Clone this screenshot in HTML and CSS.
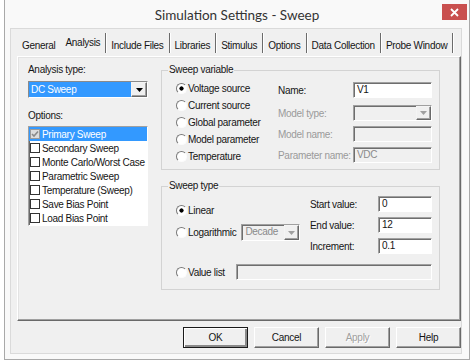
FILE: index.html
```html
<!DOCTYPE html>
<html>
<head>
<meta charset="utf-8">
<link rel="stylesheet" href="styles.css">
</head>
<body>
<div class="window">
  <div class="titlebar">
    <span class="title">Simulation Settings - Sweep</span>
    <span class="close"><svg width="9" height="9" viewBox="0 0 9 9"><path d="M1 1L8 8M8 1L1 8" stroke="#fff" stroke-width="1.8" fill="none"/></svg></span>
  </div>
  <div class="client">
    <div class="tabs">
      <span class="tab">General</span>
      <span class="tab active sep">Analysis</span>
      <span class="tab sep">Include Files</span>
      <span class="tab sep">Libraries</span>
      <span class="tab sep">Stimulus</span>
      <span class="tab sep">Options</span>
      <span class="tab sep">Data Collection</span>
      <span class="tab sep">Probe Window</span>
    </div>
    <div class="panel">
      <div class="leftcol">
        <div class="lbl">Analysis type:</div>
        <div class="combo">
          <span class="combo-text selected">DC Sweep</span>
          <span class="drop"><svg width="7" height="4" viewBox="0 0 7 4"><path d="M0 0H7L3.5 4Z" fill="#000"/></svg></span>
        </div>
        <div class="lbl options-lbl">Options:</div>
        <div class="list">
          <div class="item selected"><span class="cb grayed"><svg width="8" height="8" viewBox="0 0 8 8"><path d="M1 4L3 6L7 1.5" stroke="#8a8a8a" stroke-width="1.6" fill="none"/></svg></span>Primary Sweep</div>
          <div class="item"><span class="cb"></span>Secondary Sweep</div>
          <div class="item"><span class="cb"></span>Monte Carlo/Worst Case</div>
          <div class="item"><span class="cb"></span>Parametric Sweep</div>
          <div class="item"><span class="cb"></span>Temperature (Sweep)</div>
          <div class="item"><span class="cb"></span>Save Bias Point</div>
          <div class="item"><span class="cb"></span>Load Bias Point</div>
        </div>
      </div>
      <div class="rightcol">
        <fieldset class="group">
          <legend>Sweep variable</legend>
          <div class="g1-body">
            <div class="radios">
              <div class="radio-row"><span class="radio on"></span>Voltage source</div>
              <div class="radio-row"><span class="radio"></span>Current source</div>
              <div class="radio-row"><span class="radio"></span>Global parameter</div>
              <div class="radio-row"><span class="radio"></span>Model parameter</div>
              <div class="radio-row"><span class="radio"></span>Temperature</div>
            </div>
            <div class="fields">
              <div class="field-row first"><span class="flabel">Name:</span><span class="input">V1</span></div>
              <div class="field-row"><span class="flabel dim">Model type:</span><span class="input dis combo-input"><span class="fill"></span><span class="drop dim-drop"><svg width="7" height="4" viewBox="0 0 7 4"><path d="M0 0H7L3.5 4Z" fill="#a0a0a0"/></svg></span></span></div>
              <div class="field-row"><span class="flabel dim">Model name:</span><span class="input dis"></span></div>
              <div class="field-row"><span class="flabel dim">Parameter name:</span><span class="input dis">VDC</span></div>
            </div>
          </div>
        </fieldset>
        <fieldset class="group group2">
          <legend>Sweep type</legend>
          <div class="g2-body">
            <div class="g2-top">
              <div class="g2-left">
                <div class="radio-row"><span class="radio on"></span>Linear</div>
                <div class="radio-row"><span class="radio"></span>Logarithmic<span class="input dis combo-input decade"><span class="fill">Decade</span><span class="drop dim-drop"><svg width="7" height="4" viewBox="0 0 7 4"><path d="M0 0H7L3.5 4Z" fill="#a0a0a0"/></svg></span></span></div>
              </div>
              <div class="g2-right">
                <div class="field-row"><span class="flabel short">Start value:</span><span class="input small">0</span></div>
                <div class="field-row"><span class="flabel short">End value:</span><span class="input small">12</span></div>
                <div class="field-row"><span class="flabel short">Increment:</span><span class="input small">0.1</span></div>
              </div>
            </div>
            <div class="valuelist-row"><span class="radio"></span>Value list<span class="input dis wide"></span></div>
          </div>
        </fieldset>
      </div>
    </div>
    <div class="buttons">
      <span class="btn default">OK</span>
      <span class="btn">Cancel</span>
      <span class="btn disabled">Apply</span>
      <span class="btn">Help</span>
    </div>
  </div>
</div>
</body>
</html>
```
FILE: styles.css
```css
* { box-sizing: border-box; }
body {
  margin: 0;
  background: #fff;
  font-family: "Liberation Sans", Arial, sans-serif;
  font-size: 10px;
  letter-spacing: -0.3px;
  color: #151515;
}
.window {
  width: 466px;
  height: 360px;
  margin-left: 4px;
  background: #f9f9f9;
  border: 1px solid #a9a9a9;
  border-top: none;
  display: flex;
  flex-direction: column;
}
.titlebar {
  height: 28px;
  flex: none;
  display: grid;
  grid-template-columns: 1fr auto 1fr;
  align-items: start;
}
.title {
  grid-column: 2;
  font-family: Lato, "Liberation Sans", sans-serif;
  font-size: 13.5px;
  letter-spacing: 0;
  line-height: 16px;
  margin-top: 7px;
  color: #333;
}
.close {
  grid-column: 3;
  justify-self: end;
  width: 25px;
  height: 16px;
  margin-top: 4px;
  margin-right: 2px;
  background: #c9504f;
  display: flex;
  align-items: center;
  justify-content: center;
}
.client {
  margin: 0 7px 0 5px;
  border: 1px solid #dadada;
  background: #f0f0f0;
  padding: 4px 0 5px 6px;
}
.tabs {
  display: flex;
  height: 23px;
}
.tab {
  height: 20px;
  padding: 6px 5px 0;
  line-height: 14px;
  white-space: nowrap;
}
.tab.active { padding-top: 3px; }
.tab.sep {
  border-right: 1px solid #6b6b6b;
  box-shadow: 1px 0 0 #fff;
}
.panel {
  height: 265px;
  border: 1px solid;
  border-color: #fff #696969 #696969 #fff;
  box-shadow: inset -1px -1px #a0a0a0, inset 1px 1px #e3e3e3;
  display: flex;
  gap: 13px;
  padding: 6px 0 0 10px;
}
.leftcol {
  width: 120px;
  display: flex;
  flex-direction: column;
}
.lbl { height: 14px; line-height: 14px; }
.combo {
  margin-top: 4px;
  height: 17px;
  display: flex;
  border: 1px solid;
  border-color: #8a8a8a #fff #fff #8a8a8a;
  background: #fff;
}
.combo-text {
  flex: 1;
  line-height: 15px;
  padding-left: 2px;
}
.selected { background: #3399ff; color: #fff; }
.drop {
  width: 16px;
  flex: none;
  border: 1px solid;
  border-color: #f4f4f4 #696969 #696969 #f4f4f4;
  box-shadow: inset -1px -1px #a0a0a0;
  background: #f0f0f0;
  display: flex;
  align-items: center;
  justify-content: center;
}
.options-lbl { margin-top: 11px; }
.list {
  margin-top: 3px;
  height: 100px;
  border: 1px solid;
  border-color: #a0a0a0 #fff #fff #a0a0a0;
  box-shadow: inset 1px 1px #696969;
  background: #fff;
}
.item {
  height: 14px;
  display: flex;
  align-items: center;
  padding-left: 1px;
  white-space: nowrap;
}
.item.selected { background: #3399ff; color: #fff; }
.cb {
  width: 10px;
  height: 10px;
  flex: none;
  border: 1px solid #333;
  background: #fff;
  margin-right: 2px;
  display: flex;
  align-items: center;
  justify-content: center;
}
.cb.grayed { background: #dcdcdc; border-color: #9a9a9a; }
.rightcol {
  width: 279px;
  display: flex;
  flex-direction: column;
}
.group {
  margin: 0;
  padding: 0 7px 0 6px;
  border: 1px solid #d3d3d3;
  min-width: 0;
}
.group legend {
  padding: 0 1px;
  line-height: 14px;
}
.group2 { margin-top: 9px; }
.g1-body {
  display: flex;
  padding: 3px 0 4px 8px;
}
.radios { width: 102px; }
.radio-row {
  height: 17px;
  display: flex;
  align-items: center;
  white-space: nowrap;
}
.radio {
  width: 11px;
  height: 11px;
  flex: none;
  border-radius: 50%;
  border: 1px solid;
  border-color: #7a7a7a #fcfcfc #fcfcfc #7a7a7a;
  background: #fff;
  margin-right: 1px;
}
.radio.on { background: radial-gradient(circle, #000 0 1.8px, #fff 2.4px); }
.fields {
  margin-top: 2px;
  display: flex;
  flex-direction: column;
  gap: 5px;
}
.field-row {
  height: 16px;
  display: flex;
  align-items: center;
  white-space: nowrap;
}
.field-row.first { margin-bottom: 2px; }
.flabel { width: 75px; flex: none; }
.flabel.short { width: 68px; }
.dim { color: #9a9a9a; }
.input {
  width: 79px;
  height: 16px;
  flex: none;
  border: 1px solid;
  border-color: #a0a0a0 #fff #fff #a0a0a0;
  box-shadow: inset 1px 1px #6e6e6e;
  background: #fff;
  padding: 0 2px 0 3px;
  line-height: 14px;
}
.input.small { width: 54px; }
.input.dis { background: #f0f0f0; color: #8a8a8a; }
.combo-input {
  display: flex;
  padding: 0;
}
.combo-input .fill { flex: 1; padding-left: 3px; }
.dim-drop { width: 15px; }
.decade {
  width: 59px;
  height: 17px;
  margin-left: 5px;
}
.g2-body {
  display: flex;
  flex-direction: column;
  padding: 3px 0 9px 8px;
}
.g2-top { display: flex; }
.g2-left {
  width: 134px;
  padding-top: 6px;
  display: flex;
  flex-direction: column;
  gap: 5px;
}
.g2-right {
  display: flex;
  flex-direction: column;
  gap: 5px;
}
.valuelist-row {
  margin-top: 10px;
  height: 16px;
  display: flex;
  align-items: center;
  white-space: nowrap;
}
.input.wide { flex: 1; width: auto; margin-left: 11px; }
.buttons {
  display: flex;
  justify-content: flex-end;
  gap: 6px;
  margin-top: 6px;
}
.btn {
  width: 65px;
  height: 21px;
  border: 1px solid;
  border-color: #fff #696969 #696969 #fff;
  box-shadow: inset -1px -1px #a0a0a0;
  background: #f0f0f0;
  display: flex;
  align-items: center;
  justify-content: center;
}
.btn.default {
  border-color: #1a1a1a;
  box-shadow: inset 1px 1px #fff, inset -2px -2px #8a8a8a;
}
.btn.disabled { color: #a0a0a0; text-shadow: 1px 1px #fff; }
```
